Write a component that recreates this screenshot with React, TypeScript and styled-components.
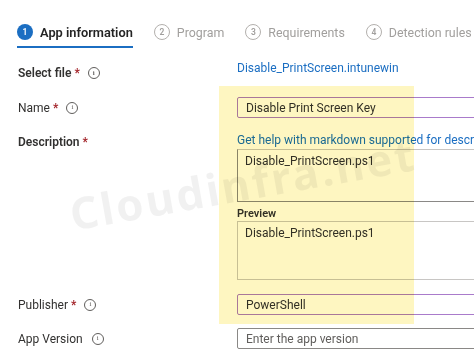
import React from "react";
import styled, { createGlobalStyle } from "styled-components";

const Global = createGlobalStyle`
  html, body { margin: 0; padding: 0; background: #ffffff; }
  body { font-family: Roboto, "Noto Sans", sans-serif; color: #323130; }
`;

const Page = styled.div`
  position: relative;
  width: 474px;
  height: 363px;
  overflow: hidden;
  background: #ffffff;
  font-size: 12px;
`;

const Tabs = styled.div`
  display: flex;
  align-items: flex-start;
  gap: 21px;
  padding: 23px 0 0 17px;
  height: 26px;
`;

const Tab = styled.div<{ $active?: boolean }>`
  display: flex;
  align-items: center;
  gap: 7px;
  height: 18px;
  padding-bottom: 5px;
  white-space: nowrap;
  font-size: ${(p) => (p.$active ? 12.8 : 12.4)}px;
  font-weight: ${(p) => (p.$active ? 600 : 400)};
  color: ${(p) => (p.$active ? "#242424" : "#a19f9d")};
  border-bottom: 2px solid ${(p) => (p.$active ? "#1b6ec2" : "transparent")};
`;

const StepCircle = styled.span<{ $active?: boolean }>`
  display: inline-flex;
  align-items: center;
  justify-content: center;
  width: 16px;
  height: 16px;
  border-radius: 50%;
  box-sizing: border-box;
  font-size: 8.5px;
  font-weight: 600;
  background: ${(p) => (p.$active ? "#1b6ec2" : "transparent")};
  color: ${(p) => (p.$active ? "#ffffff" : "#a19f9d")};
  border: ${(p) => (p.$active ? "none" : "1px solid #b3b0ad")};
`;

const Form = styled.div`
  display: grid;
  grid-template-columns: 219px 260px;
  padding-left: 18px;
`;

const Label = styled.div<{ $bold?: boolean; $h: number; $mt?: number }>`
  display: flex;
  align-items: center;
  gap: 3px;
  height: ${(p) => p.$h}px;
  margin-top: ${(p) => p.$mt ?? 0}px;
  font-weight: ${(p) => (p.$bold ? 600 : 400)};
  color: #323130;
  white-space: nowrap;
`;

const Req = styled.span`
  color: #a4262c;
  font-weight: 600;
  margin-right: 5px;
`;

const Spacer = styled.span`
  width: 3px;
`;

const Info = styled.span`
  display: inline-flex;
  align-items: center;
  justify-content: center;
  width: 10px;
  height: 10px;
  border-radius: 50%;
  border: 1px solid #605e5c;
  font-size: 7px;
  line-height: 1;
  color: #605e5c;
  font-family: "Liberation Serif", serif;
`;

const Field = styled.div<{ $mt?: number }>`
  display: flex;
  flex-direction: column;
  margin-top: ${(p) => p.$mt ?? 0}px;
`;

const Link = styled.div<{ $h: number }>`
  display: flex;
  align-items: center;
  height: ${(p) => p.$h}px;
  color: #1b6ec2;
  white-space: nowrap;
`;

const Input = styled.div<{ $purple?: boolean; $placeholder?: boolean }>`
  box-sizing: border-box;
  height: 21px;
  display: flex;
  align-items: center;
  padding-left: 8px;
  border: 1px solid ${(p) => (p.$purple ? "#a97bcb" : "#8a8886")};
  border-radius: 2px;
  background: #ffffff;
  color: ${(p) => (p.$placeholder ? "#605e5c" : "#323130")};
  white-space: nowrap;
`;

const TextArea = styled.div<{ $h: number; $soft?: boolean }>`
  box-sizing: border-box;
  height: ${(p) => p.$h}px;
  padding: 4px 0 0 7px;
  border: 1px solid #c8c6c4;
  border-bottom-color: ${(p) => (p.$soft ? "#c8c6c4" : "#8a8886")};
  border-left-color: ${(p) => (p.$soft ? "#c8c6c4" : "#8a8886")};
  background: #ffffff;
  color: #323130;
`;

const SubLabel = styled.div`
  font-size: 11px;
  font-weight: 600;
  height: 19px;
  display: flex;
  align-items: flex-end;
  padding-bottom: 1px;
  box-sizing: border-box;
  color: #323130;
`;

const Highlight = styled.div`
  position: absolute;
  left: 219px;
  top: 86px;
  width: 195px;
  height: 238px;
  background: rgba(252, 236, 120, 0.46);
  mix-blend-mode: multiply;
  pointer-events: none;
`;

const Watermark = styled.div`
  position: absolute;
  left: 70px;
  top: 192px;
  height: 44px;
  line-height: 44px;
  transform: rotate(-10deg);
  transform-origin: left center;
  font-family: "Noto Sans", sans-serif;
  font-weight: 700;
  font-size: 44px;
  letter-spacing: 2.5px;
  color: rgba(0, 0, 0, 0.055);
  white-space: nowrap;
  pointer-events: none;
`;

export default function App() {
  return (
    <>
      <Global />
      <Page>
        <Tabs>
          <Tab $active>
            <StepCircle $active>1</StepCircle>App information
          </Tab>
          <Tab>
            <StepCircle>2</StepCircle>Program
          </Tab>
          <Tab>
            <StepCircle>3</StepCircle>Requirements
          </Tab>
          <Tab>
            <StepCircle>4</StepCircle>Detection rules
          </Tab>
        </Tabs>
        <Form>
          <Label $bold $h={22} $mt={13}>
            Select file<Req>*</Req>
            <Info>i</Info>
          </Label>
          <Field $mt={8}>
            <Link $h={22}>Disable_PrintScreen.intunewin</Link>
          </Field>

          <Label $h={21} $mt={13}>
            Name<Req>*</Req>
            <Info>i</Info>
          </Label>
          <Field $mt={13}>
            <Input $purple>Disable Print Screen Key</Input>
          </Field>

          <Label $bold $h={22} $mt={13}>
            Description<Req>*</Req>
          </Label>
          <Field $mt={13}>
            <Link $h={18}>Get help with markdown supported for description</Link>
            <TextArea $h={53}>Disable_PrintScreen.ps1</TextArea>
            <SubLabel>Preview</SubLabel>
            <TextArea $h={59} $soft>
              Disable_PrintScreen.ps1
            </TextArea>
          </Field>

          <Label $h={21} $mt={14}>
            Publisher<Req>*</Req>
            <Info>i</Info>
          </Label>
          <Field $mt={14}>
            <Input $purple>PowerShell</Input>
          </Field>

          <Label $h={21} $mt={13}>
            App Version
            <Spacer />
            <Info>i</Info>
          </Label>
          <Field $mt={13}>
            <Input $placeholder>Enter the app version</Input>
          </Field>
        </Form>
        <Watermark>Cloudinfra.net</Watermark>
        <Highlight />
      </Page>
    </>
  );
}
